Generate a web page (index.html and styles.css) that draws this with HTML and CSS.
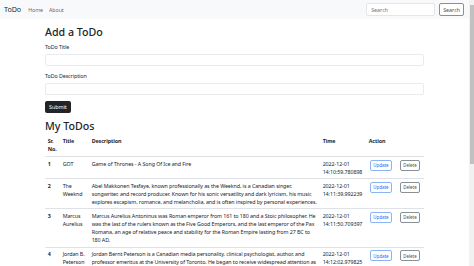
FILE: index.html
```html
<!doctype html>
<html lang="en">
<head>
    <meta charset="utf-8">
    <meta name="viewport" content="width=device-width, initial-scale=1">
    <title>ToDo</title>
    <link rel="stylesheet" href="styles.css">
</head>
<body>
    <!-- Navbar -->
    <nav class="navbar">
        <a class="brand" href="#">ToDo</a>
        <a class="nav-link" href="#">Home</a>
        <a class="nav-link" href="#">About</a>
        <form class="search">
            <input type="search" class="search-input" placeholder="Search">
            <button type="button" class="btn-search">Search</button>
        </form>
    </nav>

    <div class="container">
        <h2 class="title">Add a ToDo</h2>
        <form>
            <label class="form-label">ToDo Title</label>
            <input type="text" class="form-control">
            <label class="form-label">ToDo Description</label>
            <input type="text" class="form-control">
            <button type="button" class="btn-dark">Submit</button>
        </form>

        <h2 class="title title-list">My ToDos</h2>
        <table>
            <colgroup>
                <col class="c-no">
                <col class="c-title">
                <col class="c-desc">
                <col class="c-time">
                <col class="c-action">
            </colgroup>
            <thead>
                <tr>
                    <th>Sr. No.</th>
                    <th>Title</th>
                    <th>Description</th>
                    <th>Time</th>
                    <th>Action</th>
                </tr>
            </thead>
            <tbody>
                <tr>
                    <th>1</th>
                    <td>GOT</td>
                    <td>Game of Thrones - A Song Of Ice and Fire</td>
                    <td>2022-12-01 14:10:59.780898</td>
                    <td class="actions"><button class="btn-update">Update</button><button class="btn-delete">Delete</button></td>
                </tr>
                <tr>
                    <th>2</th>
                    <td>The Weeknd</td>
                    <td>Abel Makkonen Tesfaye, known professionally as the Weeknd, is a Canadian singer, songwriter, and record producer. Known for his sonic versatility and dark lyricism, his music explores escapism, romance, and melancholia, and is often inspired by personal experiences.</td>
                    <td>2022-12-01 14:11:39.992239</td>
                    <td class="actions"><button class="btn-update">Update</button><button class="btn-delete">Delete</button></td>
                </tr>
                <tr>
                    <th>3</th>
                    <td>Marcus Aurelius</td>
                    <td>Marcus Aurelius Antoninus was Roman emperor from 161 to 180 and a Stoic philosopher. He was the last of the rulers known as the Five Good Emperors, and the last emperor of the Pax Romana, an age of relative peace and stability for the Roman Empire lasting from 27 BC to 180 AD.</td>
                    <td>2022-12-01 14:11:50.709397</td>
                    <td class="actions"><button class="btn-update">Update</button><button class="btn-delete">Delete</button></td>
                </tr>
                <tr>
                    <th>4</th>
                    <td>Jordan B. Peterson</td>
                    <td>Jordan Bernt Peterson is a Canadian media personality, clinical psychologist, author, and professor emeritus at the University of Toronto. He began to receive widespread attention as a professor for his views on cultural and political issues.</td>
                    <td>2022-12-01 14:12:02.979825</td>
                    <td class="actions"><button class="btn-update">Update</button><button class="btn-delete">Delete</button></td>
                </tr>
            </tbody>
        </table>
    </div>

    <!-- barra de desplazamiento -->
    <div class="scrollbar"><div class="thumb"></div></div>
</body>
</html>
```

FILE: styles.css
```css
:root {
    --text-color: #212529;
    --navbar-bg: #f8f9fa;
    --border-color: #dee2e6;
    --primary: #0d6efd;
}

body {
    margin: 0;
    padding: 0 5px 0 0;
    color: var(--text-color);
    font-family: "Noto Sans", "Open Sans", sans-serif;
    font-size: 5.33px;
    line-height: 1.5;
    letter-spacing: -0.08px;
    background: #fff;
    overflow: hidden;
}

.navbar {
    display: flex;
    align-items: center;
    height: 19px;
    padding: 0 5px 0 4px;
    background-color: var(--navbar-bg);
}

.brand {
    font-size: 7.2px;
    color: rgba(0, 0, 0, 0.9);
    text-decoration: none;
    margin-right: 7px;
}

.nav-link {
    color: rgba(0, 0, 0, 0.65);
    text-decoration: none;
    margin-right: 6px;
}

.search {
    display: flex;
    margin-left: auto;
    gap: 4px;
}

.search-input {
    width: 69px;
    height: 13px;
    box-sizing: border-box;
    border: 1px solid #e4e7ea;
    border-radius: 2px;
    padding: 0 4px;
    font: inherit;
    font-size: 5.33px;
    background: #fff;
}

.search-input::placeholder {
    color: #6c757d;
}

.btn-search {
    height: 13px;
    padding: 0 3px;
    font: inherit;
    font-size: 5.33px;
    color: #495057;
    background: #fff;
    border: 1px solid #8a8f94;
    border-radius: 2px;
}

.container {
    width: 379px;
    margin-left: 45px;
    padding-top: 6.6px;
}

.title {
    font-size: 10.67px;
    font-weight: 500;
    line-height: 1.2;
    letter-spacing: 0;
    margin: 0 0 4.6px;
}

.form-label {
    display: block;
    margin-bottom: 2.67px;
}

.form-control {
    display: block;
    width: 100%;
    height: 12.5px;
    box-sizing: border-box;
    border: 1px solid #e9ecef;
    border-radius: 2px;
    margin: 0 0 6px;
    padding: 0 4px;
    font: inherit;
}

.btn-dark {
    display: block;
    height: 12px;
    padding: 0 4px;
    font: inherit;
    color: #fff;
    background-color: #212529;
    border: none;
    border-radius: 2px;
}

.title-list {
    margin-top: 6.6px;
    margin-bottom: 2px;
}

table {
    width: 100%;
    table-layout: fixed;
    border-collapse: collapse;
}

.c-no { width: 15px; }
.c-title { width: 29px; }
.c-desc { width: 231px; }
.c-time { width: 46px; }
.c-action { width: 58px; }

th, td {
    padding: 2.67px;
    text-align: left;
    vertical-align: top;
    border-bottom: 1px solid var(--border-color);
}

th {
    font-weight: 700;
}

.actions {
    white-space: nowrap;
}

td button {
    height: 11px;
    padding: 0 2.4px;
    font: inherit;
    font-size: 4.4px;
    background: #fff;
    border-radius: 2px;
    vertical-align: top;
}

.btn-update {
    color: var(--primary);
    border: 1px solid #8cb4f5;
    margin-left: 1.3px;
}

.btn-delete {
    color: #495057;
    border: 1px solid #8a8f94;
    margin-left: 8px;
}

/* barra de desplazamiento dibujada */
.scrollbar {
    position: fixed;
    top: 0;
    right: 0;
    width: 5px;
    height: 100%;
    background: #f1f1f1;
}

.thumb {
    margin: 5px 0 0 0.5px;
    width: 4px;
    height: 159px;
    background: #c1c1c1;
}
```
